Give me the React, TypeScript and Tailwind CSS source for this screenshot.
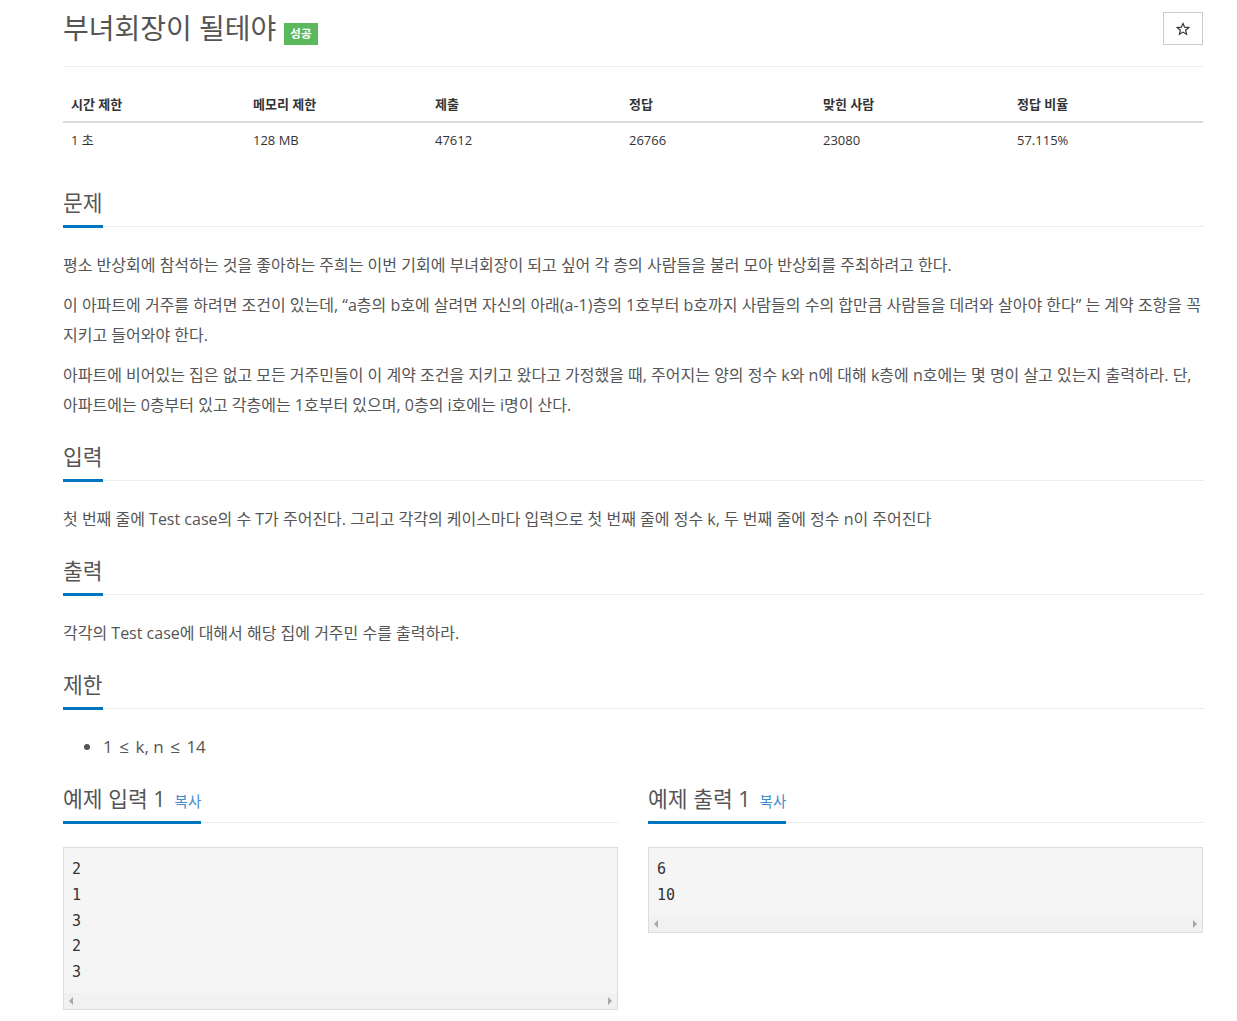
import React from 'react'

const stats = [
  { label: '시간 제한', value: '1 초', width: 'w-[182px]' },
  { label: '메모리 제한', value: '128 MB', width: 'w-[182px]' },
  { label: '제출', value: '47612', width: 'w-[194px]' },
  { label: '정답', value: '26766', width: 'w-[194px]' },
  { label: '맞힌 사람', value: '23080', width: 'w-[194px]' },
  { label: '정답 비율', value: '57.115%', width: 'w-[194px]' },
]

function Headline({ children }: { children: React.ReactNode }) {
  return (
    <div className="border-b border-dotted border-[#ddd]">
      <h2 className="-mb-[2px] inline-block border-b-[3px] border-[#0076c0] pb-[7px] text-[21.5px] leading-[30px] font-normal text-[#555]">
        {children}
      </h2>
    </div>
  )
}

function FakeScrollbar() {
  return (
    <div className="flex h-[16px] items-center justify-between bg-[#f1f1f1] px-[5px]">
      <svg viewBox="0 0 4 8" className="h-[8px] w-[4px]" fill="#a8a8a8">
        <path d="M4 0 0 4 4 8Z" />
      </svg>
      <svg viewBox="0 0 4 8" className="h-[8px] w-[4px]" fill="#a8a8a8">
        <path d="M0 0 4 4 0 8Z" />
      </svg>
    </div>
  )
}

function Sample({ title, lines }: { title: string; lines: string[] }) {
  return (
    <section className="w-[555px]">
      <Headline>
        {title}
        <span className="ml-[9px] text-[14.5px] leading-none text-[#428bca]">복사</span>
      </Headline>
      <div className="mt-[24px] border border-[#ddd] bg-[#f5f5f6]">
        <pre className="px-[8px] pt-[9px] pb-[7px] font-['DejaVu_Sans_Mono',monospace] text-[15px] leading-[25.8px] text-[#333]">
          {lines.join('\n')}
        </pre>
        <FakeScrollbar />
      </div>
    </section>
  )
}

export default function App() {
  return (
    <div className="min-h-screen bg-white font-['Open_Sans','Noto_Sans_CJK_KR',sans-serif] text-[#333]">
      <div className="ml-[63px] w-[1140px] pb-[12px]">
        <div className="flex items-center justify-between border-b border-[#eee] pt-[12px] pb-[21px]">
          <div className="flex h-[33px] items-end gap-[8px]">
            <h1 className="text-[28px] leading-[33px] font-normal text-[#555]">부녀회장이 될테야</h1>
            <span className="inline-flex h-[22px] items-center bg-[#5cb85c] px-[6px] text-[11.5px] font-bold text-white">
              성공
            </span>
          </div>
          <button className="flex h-[33px] w-[40px] items-center justify-center border border-[#ccc] bg-white">
            <svg viewBox="0 0 24 24" className="h-[14px] w-[14px]" fill="none" stroke="#333" strokeWidth="2" strokeLinejoin="miter">
              <path d="M12 2.5l2.8 6.4 6.9.6-5.2 4.6 1.6 6.8L12 17.3l-6.1 3.6 1.6-6.8-5.2-4.6 6.9-.6z" />
            </svg>
          </button>
        </div>

        <table className="mt-[20px] w-full border-collapse">
          <thead>
            <tr className="border-b-2 border-[#ddd]">
              {stats.map((s) => (
                <th key={s.label} className={`${s.width} px-[8px] py-[8px] text-left text-[13px] leading-[18px] font-bold text-[#333]`}>
                  {s.label}
                </th>
              ))}
            </tr>
          </thead>
          <tbody>
            <tr>
              {stats.map((s) => (
                <td key={s.label} className="px-[8px] py-[8px] text-[13px] leading-[18px] text-[#333]">
                  {s.value}
                </td>
              ))}
            </tr>
          </tbody>
        </table>

        <section className="mt-[31px]">
          <Headline>문제</Headline>
          <div className="mt-[23px] space-y-[10px] text-[16px] leading-[30px] text-[#555]">
            <p>평소 반상회에 참석하는 것을 좋아하는 주희는 이번 기회에 부녀회장이 되고 싶어 각 층의 사람들을 불러 모아 반상회를 주최하려고 한다.</p>
            <p>
              이 아파트에 거주를 하려면 조건이 있는데, “a층의 b호에 살려면 자신의 아래(a-1)층의 1호부터 b호까지 사람들의 수의 합만큼 사람들을 데려와 살아야 한다” 는 계약 조항을 꼭 지키고 들어와야 한다.
            </p>
            <p>
              아파트에 비어있는 집은 없고 모든 거주민들이 이 계약 조건을 지키고 왔다고 가정했을 때, 주어지는 양의 정수 k와 n에 대해 k층에 n호에는 몇 명이 살고 있는지 출력하라. 단, 아파트에는 0층부터 있고 각층에는 1호부터 있으며, 0층의 i호에는 i명이 산다.
            </p>
          </div>
        </section>

        <section className="mt-[22px]">
          <Headline>입력</Headline>
          <p className="mt-[23px] text-[16px] leading-[30px] text-[#555]">
            첫 번째 줄에 Test case의 수 T가 주어진다. 그리고 각각의 케이스마다 입력으로 첫 번째 줄에 정수 k, 두 번째 줄에 정수 n이 주어진다
          </p>
        </section>

        <section className="mt-[22px]">
          <Headline>출력</Headline>
          <p className="mt-[23px] text-[16px] leading-[30px] text-[#555]">각각의 Test case에 대해서 해당 집에 거주민 수를 출력하라.</p>
        </section>

        <section className="mt-[22px]">
          <Headline>제한</Headline>
          <ul className="mt-[23px] list-disc pl-[40px] text-[17px] leading-[30px] text-[#555]">
            <li>
              1<span className="mx-[6.5px]">≤</span>k, n<span className="mx-[6.5px]">≤</span>14
            </li>
          </ul>
        </section>

        <div className="mt-[22px] flex gap-[30px]">
          <Sample title="예제 입력 1" lines={['2', '1', '3', '2', '3']} />
          <Sample title="예제 출력 1" lines={['6', '10']} />
        </div>
      </div>
    </div>
  )
}
